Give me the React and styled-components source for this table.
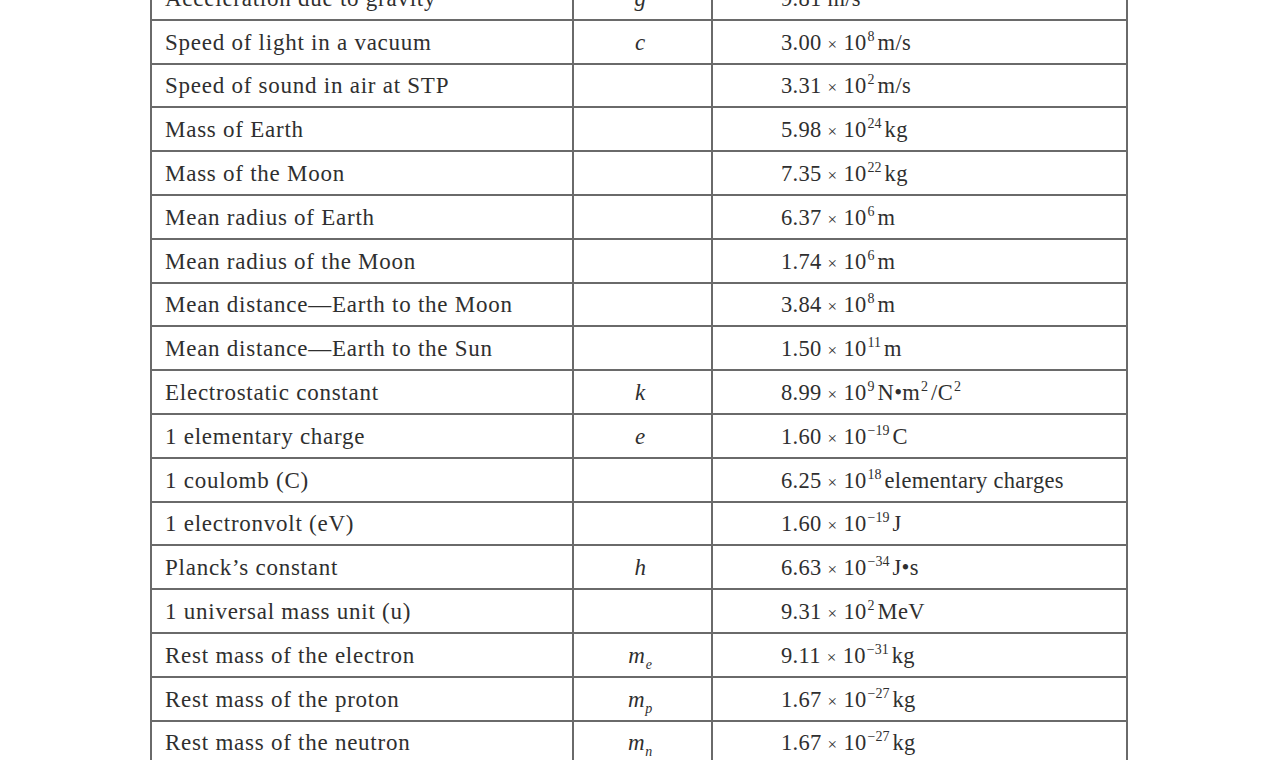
import styled, { createGlobalStyle } from "styled-components";

const GlobalStyle = createGlobalStyle`
  html, body {
    margin: 0;
    padding: 0;
    background: #ffffff;
    overflow: hidden;
  }
`;

const constants = [
  { name: "Acceleration due to gravity", sym: "g", value: "9.81 m/s", unitExp: "2" },
  { name: "Speed of light in a vacuum", sym: "c", mant: "3.00", exp: "8", unit: "m/s" },
  { name: "Speed of sound in air at STP", mant: "3.31", exp: "2", unit: "m/s" },
  { name: "Mass of Earth", mant: "5.98", exp: "24", unit: "kg" },
  { name: "Mass of the Moon", mant: "7.35", exp: "22", unit: "kg" },
  { name: "Mean radius of Earth", mant: "6.37", exp: "6", unit: "m" },
  { name: "Mean radius of the Moon", mant: "1.74", exp: "6", unit: "m" },
  { name: "Mean distance\u2014Earth to the Moon", mant: "3.84", exp: "8", unit: "m" },
  { name: "Mean distance\u2014Earth to the Sun", mant: "1.50", exp: "11", unit: "m" },
  { name: "Electrostatic constant", sym: "k", mant: "8.99", exp: "9", unit: "coulomb" },
  { name: "1 elementary charge", sym: "e", mant: "1.60", exp: "\u221219", unit: "C" },
  { name: "1 coulomb (C)", mant: "6.25", exp: "18", unit: "elementary charges" },
  { name: "1 electronvolt (eV)", mant: "1.60", exp: "\u221219", unit: "J" },
  { name: "Planck\u2019s constant", sym: "h", mant: "6.63", exp: "\u221234", unit: "J\u2022s" },
  { name: "1 universal mass unit (u)", mant: "9.31", exp: "2", unit: "MeV" },
  { name: "Rest mass of the electron", sym: "m", sub: "e", mant: "9.11", exp: "\u221231", unit: "kg" },
  { name: "Rest mass of the proton", sym: "m", sub: "p", mant: "1.67", exp: "\u221227", unit: "kg" },
  { name: "Rest mass of the neutron", sym: "m", sub: "n", mant: "1.67", exp: "\u221227", unit: "kg" },
];

const Page = styled.div`
  display: flex;
  justify-content: center;
  font-family: "Liberation Serif", "DejaVu Serif", serif;
  color: #2f2f2f;
`;

// the top of the table runs past the top of the window
const Table = styled.div`
  display: grid;
  grid-template-columns: 420px 137px 413px;
  grid-auto-rows: 41.8px;
  gap: 2px;
  padding: 2px;
  margin-top: -25px;
  background: #6a6a6a;
`;

const Cell = styled.div`
  background: #ffffff;
  display: flex;
  align-items: center;
  justify-content: ${(p) => (p.$center ? "center" : "flex-start")};
  padding-left: ${(p) => (p.$center ? "0" : p.$value ? "68px" : "13px")};
  padding-top: 2px;
  font-size: ${(p) => (p.$value ? "22.5px" : "23px")};
  letter-spacing: ${(p) => (p.$value ? "0.3px" : "0.75px")};
  white-space: nowrap;
`;

const Sym = styled.span`
  font-style: italic;
  font-size: 23px;
  padding-right: 4px;
`;

const Sup = styled.sup`
  font-size: 14px;
  vertical-align: 9px;
  line-height: 0;
  margin: 0 3px 0 1px;
  letter-spacing: 0;
`;

const Sub = styled.sub`
  font-size: 14px;
  font-style: italic;
  vertical-align: -6px;
  line-height: 0;
`;

const Times = styled.span`
  font-size: 17px;
  margin: 0 6px;
`;

const Value = ({ row }) => {
  if (row.value) {
    return (
      <span>
        {row.value}
        <Sup>{row.unitExp}</Sup>
      </span>
    );
  }
  return (
    <span>
      {row.mant}
      <Times>×</Times>
      10
      <Sup>{row.exp}</Sup>
      {row.unit === "coulomb" ? (
        <>
          N•m<Sup>2</Sup>/C<Sup>2</Sup>
        </>
      ) : (
        row.unit
      )}
    </span>
  );
};

export default function App() {
  return (
    <>
      <GlobalStyle />
      <Page>
        <Table>
          {constants.map((row) => (
            <>
              <Cell key={row.name + "n"}>{row.name}</Cell>
              <Cell key={row.name + "s"} $center>
                {row.sym && (
                  <Sym>
                    {row.sym}
                    {row.sub && <Sub>{row.sub}</Sub>}
                  </Sym>
                )}
              </Cell>
              <Cell key={row.name + "v"} $value>
                <Value row={row} />
              </Cell>
            </>
          ))}
        </Table>
      </Page>
    </>
  );
}
